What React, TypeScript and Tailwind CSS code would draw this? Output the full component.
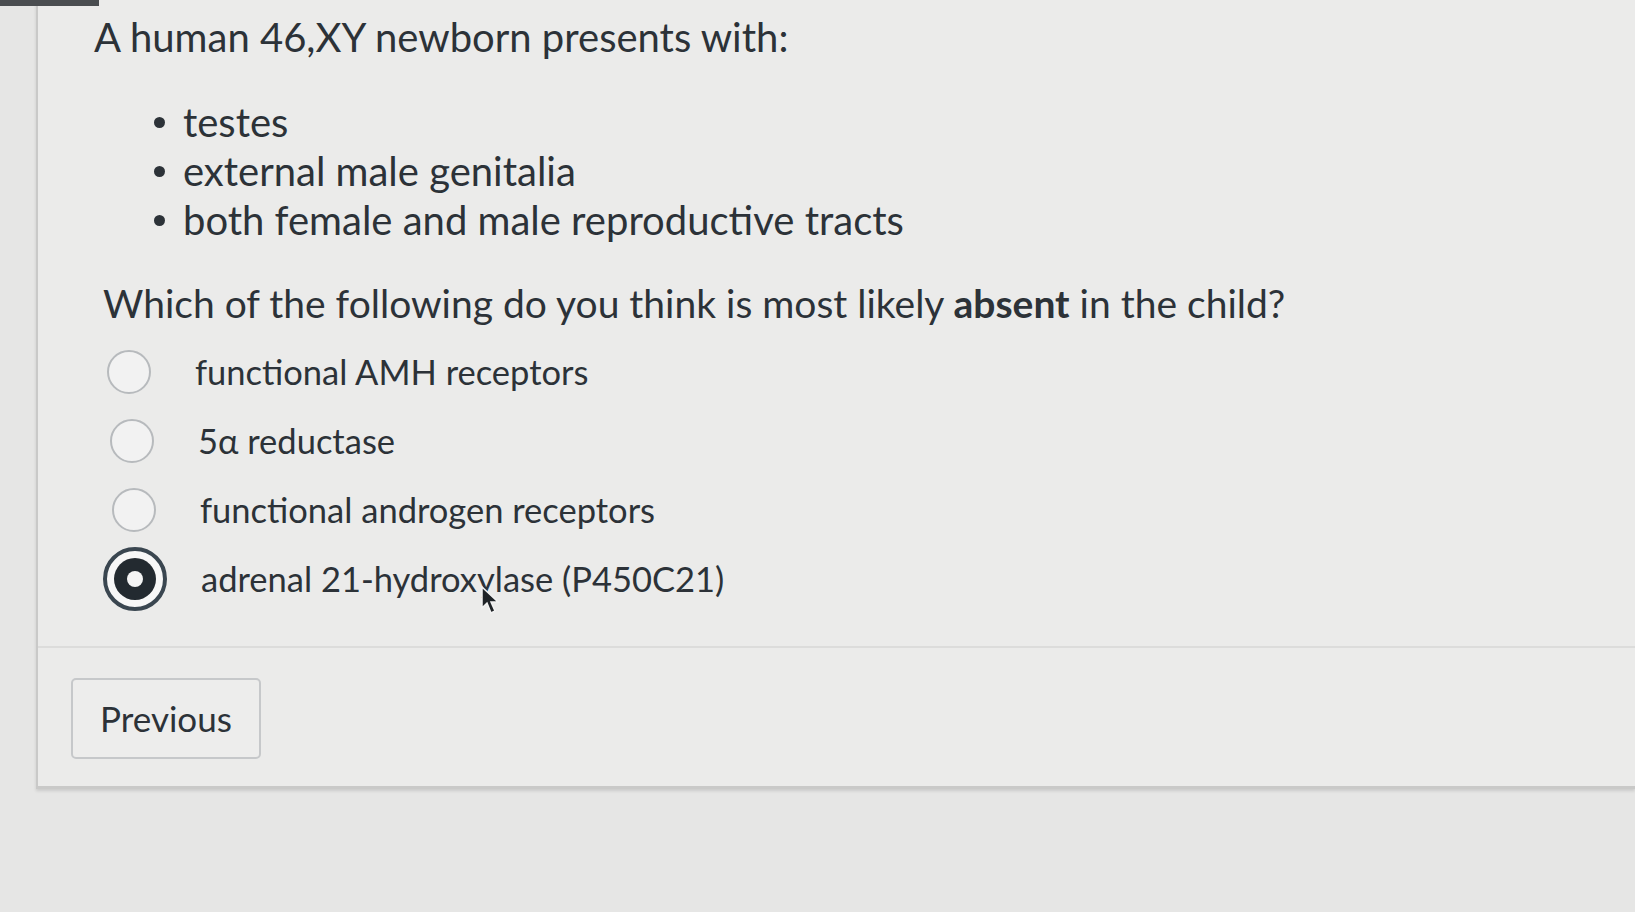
import React from 'react'

const options = [
    { label: 'functional AMH receptors', selected: false, shift: 'ml-0' },
    { label: '5α reductase', selected: false, shift: 'ml-[3px]' },
    { label: 'functional androgen receptors', selected: false, shift: 'ml-[5px]' },
    { label: 'adrenal 21-hydroxylase (P450C21)', selected: true, shift: 'ml-[6px]' },
]

function Radio({ selected }: { selected: boolean }) {
    if (selected) {
        return (
            <div className="flex h-[64px] w-[64px] items-center justify-center rounded-full border-[4px] border-[#3a4650] bg-[#f7f7f7]">
                <div className="flex h-[42px] w-[42px] items-center justify-center rounded-full bg-[#232a30]">
                    <div className="h-[16px] w-[16px] rounded-full bg-[#f4f4f4]" />
                </div>
            </div>
        )
    }
    return <div className="h-[44px] w-[44px] rounded-full border-2 border-[#b7babd] bg-[#f2f2f2]" />
}

export default function App() {
    return (
        <div
            className="relative h-[912px] w-[1635px] overflow-hidden bg-[#e6e6e5] text-[#2c3238]"
            style={{ fontFamily: 'Lato, "Open Sans", sans-serif' }}
        >
            <div className="absolute left-0 top-0 h-[6px] w-[99px] bg-[#4a4d50]" />
            <div className="ml-[36px] border-b-[3px] border-l-2 border-[#c9c9c8] bg-[#ebebea] shadow-[0_2px_3px_rgba(0,0,0,0.12)]">
                <div className="pl-[56px] pt-[13px]">
                    <h1 className="text-[40px] leading-[48px]">A human 46,XY newborn presents with:</h1>
                    <ul className="mt-[37px] ml-[60px] flex flex-col">
                        {['testes', 'external male genitalia', 'both female and male reproductive tracts'].map((t) => (
                            <li key={t} className="flex items-center text-[40px] leading-[49px]">
                                <span className="mr-[18px] h-[11px] w-[11px] rounded-full bg-[#2c3238]" />
                                {t}
                            </li>
                        ))}
                    </ul>
                    <p className="ml-[9px] mt-[35px] text-[39px] leading-[46px]">
                        Which of the following do you think is most likely <b className="font-bold">absent</b> in the child?
                    </p>
                    <div className="mt-[11px] ml-[13px] flex flex-col">
                        {options.map((o) => (
                            <div key={o.label} className={`flex h-[69px] items-center ${o.shift}`}>
                                <div className="flex w-[88px] items-center">
                                    <div className={o.selected ? '-ml-[10px]' : ''}>
                                        <Radio selected={o.selected} />
                                    </div>
                                </div>
                                <span className="text-[34.5px]">{o.label}</span>
                            </div>
                        ))}
                    </div>
                </div>
                <div className="mt-[33px] border-t-2 border-[#dcdcdb]" />
                <div className="px-[33px] pt-[30px] pb-[27px]">
                    <button className="h-[81px] w-[190px] rounded-[5px] border-2 border-[#c6c8ca] bg-[#ededec] text-[35px] text-[#2c3238]">
                        Previous
                    </button>
                </div>
            </div>
            <svg className="absolute left-[480px] top-[586px]" width="20" height="30" viewBox="0 0 20 30">
                <path d="M2 1 L2 22 L7 17 L11 27 L15 25 L11 16 L18 16 Z" fill="#1f2327" stroke="#f2f2f2" strokeWidth="1.5" />
            </svg>
        </div>
    )
}
